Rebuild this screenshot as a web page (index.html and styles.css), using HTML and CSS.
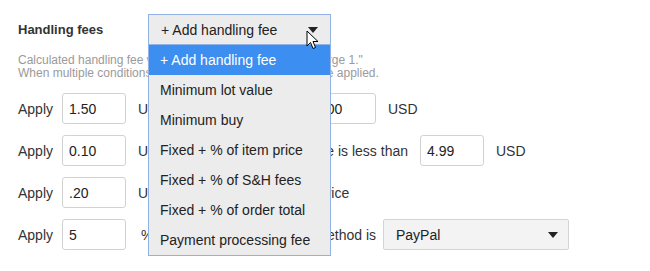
FILE: index.html
```html
<!DOCTYPE html>
<html>

<head>
  <meta charset="UTF-8">
  <title>Handling fees</title>
  <link rel="stylesheet" href="styles.css">
</head>

<body>
  <div class="panel">
    <div class="head">
      <div class="title">Handling fees</div>
      <div class="picker">
        <div class="select open">
          <span>+ Add handling fee</span>
          <span class="caret"></span>
        </div>
        <ul class="menu">
          <li class="on">+ Add handling fee</li>
          <li>Minimum lot value</li>
          <li>Minimum buy</li>
          <li>Fixed + % of item price</li>
          <li>Fixed + % of S&amp;H fees</li>
          <li>Fixed + % of order total</li>
          <li>Payment processing fee</li>
        </ul>
        <svg class="cursor" width="13" height="20" viewBox="0 0 13 20">
          <path d="M1 1 L1 16 L4.5 12.5 L7 18.5 L9.5 17.5 L7 11.5 L12 11.5 Z" fill="#fff" stroke="#000" stroke-width="1" stroke-linejoin="round" />
        </svg>
      </div>
    </div>

    <p class="note">
      Calculated handling fee will be displayed as "Handling charge 1."<br>
      When multiple conditions are met, all handling fees shall be applied.
    </p>

    <div class="rule">
      <span class="lbl">Apply</span>
      <input class="box" type="text" value="1.50">
      <span class="txt r1">USD if lot value is below</span>
      <input class="box" type="text" value="100">
      <span class="txt">USD</span>
    </div>

    <div class="rule">
      <span class="lbl">Apply</span>
      <input class="box" type="text" value="0.10">
      <span class="txt">USD if the maximum total value is less than</span>
      <input class="box" type="text" value="4.99">
      <span class="txt">USD</span>
    </div>

    <div class="rule">
      <span class="lbl">Apply</span>
      <input class="box" type="text" value=".20">
      <span class="txt">USD + 2.5% of the total item price</span>
    </div>

    <div class="rule">
      <span class="lbl">Apply</span>
      <input class="box" type="text" value="5">
      <span class="txt r4">% of order totals if payment method is</span>
      <div class="select pay">
        <span>PayPal</span>
        <span class="caret"></span>
      </div>
    </div>
  </div>
</body>

</html>
```

FILE: styles.css
```css
* {
  box-sizing: border-box;
}

body {
  margin: 0;
  font-family: "Liberation Sans", Arial, sans-serif;
  color: #333;
  background: #fff;
}

.panel {
  padding: 14px 18px;
}

.head {
  display: flex;
  align-items: center;
}

.title {
  width: 130px;
  font-size: 13px;
  font-weight: bold;
  color: #333;
}

.picker {
  position: relative;
}

.select {
  display: flex;
  align-items: center;
  justify-content: space-between;
  height: 31px;
  padding: 0 10px 0 12px;
  font-size: 14px;
  color: #222;
  background: #f3f3f3;
  border: 1px solid #d4d4d4;
  border-radius: 2px;
}

.select.open {
  width: 183px;
  padding-right: 12px;
  background: #ececec;
  border-color: #92b1e4;
  border-radius: 0;
}

.caret {
  width: 0;
  height: 0;
  border-left: 5px solid transparent;
  border-right: 5px solid transparent;
  border-top: 6px solid #222;
}

.menu {
  position: absolute;
  top: 31px;
  left: 0;
  width: 183px;
  margin: 0;
  padding: 0;
  list-style: none;
  background: #ececec;
  border: 1px solid #92b1e4;
  border-top: 0;
  z-index: 2;
}

.menu li {
  height: 30px;
  line-height: 30px;
  padding: 0 11px;
  font-size: 14px;
  color: #222;
}

.menu li.on {
  background: #3c8ef0;
  color: #fff;
}

.cursor {
  position: absolute;
  left: 158px;
  top: 16px;
  z-index: 3;
}

.note {
  margin: 9px 0 0;
  font-size: 12px;
  line-height: 13px;
  color: #9a9a9a;
}

.rule {
  display: flex;
  align-items: center;
  margin-top: 11px;
  font-size: 14px;
}

.note + .rule {
  margin-top: 13px;
}

.lbl {
  width: 44px;
}

.box {
  width: 64px;
  height: 31px;
  padding: 0 6px;
  font-family: inherit;
  font-size: 14px;
  color: #222;
  border: 1px solid #d2d2d2;
  border-radius: 3px;
}

.txt {
  margin: 0 12px;
}

.r1 {
  width: 162px;
}

.r4 {
  margin-left: 15px;
  margin-right: 7px;
}

.select.pay {
  width: 186px;
}
```
